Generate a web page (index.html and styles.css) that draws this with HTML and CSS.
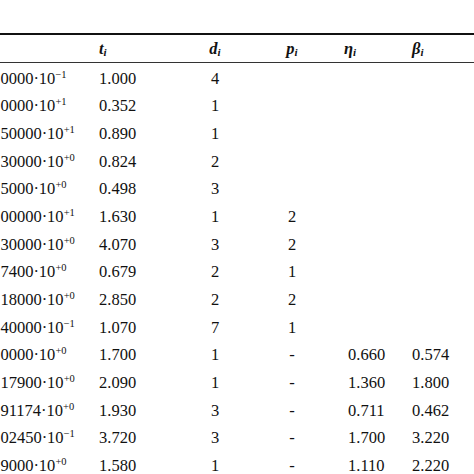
FILE: index.html
```html
<!DOCTYPE html>
<html>
<head>
<meta charset="utf-8">
<link rel="stylesheet" href="styles.css">
</head>
<body>
<div class="page">
<table class="params">
  <colgroup>
    <col class="c-val">
    <col class="c-t">
    <col class="c-d">
    <col class="c-p">
    <col class="c-eta">
    <col class="c-beta">
  </colgroup>
  <thead>
    <tr>
      <th class="val"></th>
      <th class="t">t<sub>i</sub></th>
      <th class="d">d<sub>i</sub></th>
      <th class="p">p<sub>i</sub></th>
      <th class="eta">η<sub>i</sub></th>
      <th class="beta">β<sub>i</sub></th>
    </tr>
  </thead>
  <tbody>
    <tr><td class="val">1.0000·10<sup>−1</sup></td><td class="t">1.000</td><td class="d">4</td><td class="p"></td><td class="eta"></td><td class="beta"></td></tr>
    <tr><td class="val">1.0000·10<sup>+1</sup></td><td class="t">0.352</td><td class="d">1</td><td class="p"></td><td class="eta"></td><td class="beta"></td></tr>
    <tr><td class="val">1.50000·10<sup>+1</sup></td><td class="t">0.890</td><td class="d">1</td><td class="p"></td><td class="eta"></td><td class="beta"></td></tr>
    <tr><td class="val">1.30000·10<sup>+0</sup></td><td class="t">0.824</td><td class="d">2</td><td class="p"></td><td class="eta"></td><td class="beta"></td></tr>
    <tr><td class="val">2.5000·10<sup>+0</sup></td><td class="t">0.498</td><td class="d">3</td><td class="p"></td><td class="eta"></td><td class="beta"></td></tr>
    <tr><td class="val">1.00000·10<sup>+1</sup></td><td class="t">1.630</td><td class="d">1</td><td class="p">2</td><td class="eta"></td><td class="beta"></td></tr>
    <tr><td class="val">2.30000·10<sup>+0</sup></td><td class="t">4.070</td><td class="d">3</td><td class="p">2</td><td class="eta"></td><td class="beta"></td></tr>
    <tr><td class="val">1.7400·10<sup>+0</sup></td><td class="t">0.679</td><td class="d">2</td><td class="p">1</td><td class="eta"></td><td class="beta"></td></tr>
    <tr><td class="val">1.18000·10<sup>+0</sup></td><td class="t">2.850</td><td class="d">2</td><td class="p">2</td><td class="eta"></td><td class="beta"></td></tr>
    <tr><td class="val">1.40000·10<sup>−1</sup></td><td class="t">1.070</td><td class="d">7</td><td class="p">1</td><td class="eta"></td><td class="beta"></td></tr>
    <tr><td class="val">1.0000·10<sup>+0</sup></td><td class="t">1.700</td><td class="d">1</td><td class="p">-</td><td class="eta">0.660</td><td class="beta">0.574</td></tr>
    <tr><td class="val">1.17900·10<sup>+0</sup></td><td class="t">2.090</td><td class="d">1</td><td class="p">-</td><td class="eta">1.360</td><td class="beta">1.800</td></tr>
    <tr><td class="val">1.91174·10<sup>+0</sup></td><td class="t">1.930</td><td class="d">3</td><td class="p">-</td><td class="eta">0.711</td><td class="beta">0.462</td></tr>
    <tr><td class="val">1.02450·10<sup>−1</sup></td><td class="t">3.720</td><td class="d">3</td><td class="p">-</td><td class="eta">1.700</td><td class="beta">3.220</td></tr>
    <tr><td class="val">1.9000·10<sup>+0</sup></td><td class="t">1.580</td><td class="d">1</td><td class="p">-</td><td class="eta">1.110</td><td class="beta">2.220</td></tr>
  </tbody>
</table>
</div>
</body>
</html>
```

FILE: styles.css
```css
html, body {
  margin: 0;
  padding: 0;
  background: #fff;
  overflow: hidden;
}

.page {
  width: 474px;
  height: 474px;
  overflow: hidden;
  padding-top: 33px;
  box-sizing: border-box;
}

.params {
  font-family: "Liberation Serif", "Times New Roman", serif;
  font-size: 16.5px;
  color: #111;
  border-collapse: separate;
  border-spacing: 0;
  table-layout: fixed;
  width: 505px;
  margin-left: -12px;
}

.c-val { width: 111px; }
.c-t { width: 91px; }
.c-d { width: 50px; }
.c-p { width: 104px; }
.c-eta { width: 68px; }
.c-beta { width: 81px; }

.params th {
  font-weight: bold;
  font-style: italic;
  text-align: left;
  padding: 1px 0 0 0;
  height: 26px;
  line-height: 26px;
  border-top: 2px solid #111;
  border-bottom: 1px solid #333;
  white-space: nowrap;
}

.params th sub {
  font-size: 11px;
  vertical-align: -2px;
  line-height: 0;
}

.params td {
  padding: 0;
  height: 27.68px;
  line-height: 27.68px;
  text-align: left;
  white-space: nowrap;
}

.params tbody tr:first-child td {
  padding-top: 1.5px;
}

.params sup {
  font-size: 10.5px;
  vertical-align: 6px;
  line-height: 0;
}

.params .d,
.params .p {
  text-align: center;
}

.params td.eta {
  padding-left: 4px;
}
```
